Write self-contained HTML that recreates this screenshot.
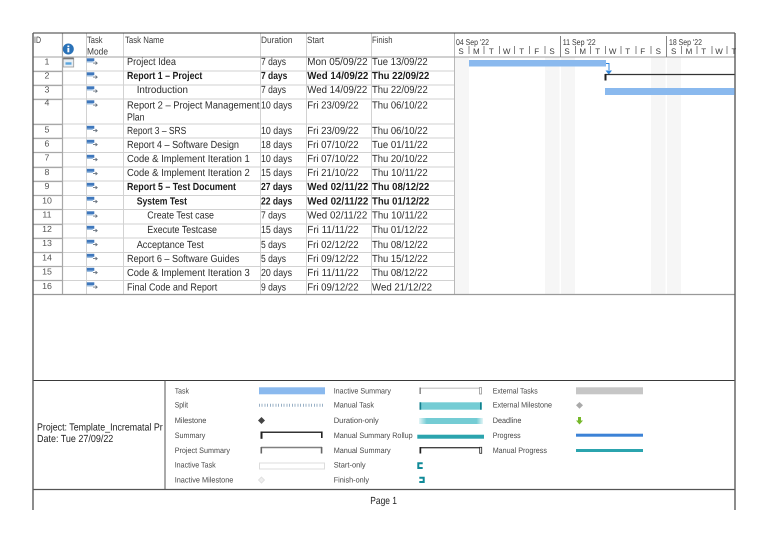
<!DOCTYPE html>
<html><head><meta charset="utf-8"><title>Gantt</title>
<style>
html,body{margin:0;padding:0;background:#fff;width:768px;height:543px;overflow:hidden}
svg{display:block;filter:blur(.35px)}
text{font-family:"Liberation Sans",sans-serif;fill:#2c2c2c}
.n text{font-size:10.300px}
.n text.b{font-weight:bold;fill:#1c1c1c}
.id text{font-size:8.800px;text-anchor:middle;fill:#555}
.h text{font-size:9.200px;fill:#3c3c3c}
.d text{font-size:8px;text-anchor:middle;fill:#3c3c3c}
.l text{font-size:7.900px;fill:#484848}
</style></head><body>
<svg width="768" height="543" viewBox="0 0 768 543" xmlns="http://www.w3.org/2000/svg" text-rendering="geometricPrecision">
<rect width="768" height="543" fill="#fff"/>
<!-- weekend shading -->
<g fill="#f6f6f6">
<rect x="455" y="57" width="14" height="237"/>
<rect x="545" y="57" width="14.500" height="237"/><rect x="561" y="57" width="14" height="237"/>
<rect x="651" y="57" width="14.500" height="237"/><rect x="667" y="57" width="14" height="237"/>
</g>
<!-- row lines -->
<g stroke="#d2d2d2" stroke-width="1">
<path d="M33 71H454M33 85H454M33 99H454M33 124H454M33 138H454M33 152.500H454M33 167H454M33 181H454M33 195.500H454M33 209.500H454M33 224H454M33 238H454M33 252.500H454M33 266.500H454M33 280.500H454"/>
<path d="M86.500 57V294M123.500 33V294M260.500 33V294M306.500 33V294M371.500 33V294"/>
</g>
<path d="M62.500 33V294" stroke="#a8a8a8" stroke-width="1.200"/>
<path d="M86.500 33V57" stroke="#c8c8c8"/>
<path d="M33 71.500H62M33 85.500H62M33 99.500H62M33 124.500H62M33 138.500H62M33 152.500H62M33 167.500H62M33 181.500H62M33 195.500H62M33 209.500H62M33 224.500H62M33 238.500H62M33 252.500H62M33 266.500H62M33 280.500H62" stroke="#a8a8a8" stroke-width="1.200"/>
<path d="M454.500 33V294" stroke="#b8b8b8"/>
<path d="M33 57H735" stroke="#a0a0a0" stroke-width="1.100"/>
<path d="M33 294.500H735" stroke="#999" stroke-width="1.300"/>
<!-- frame -->
<path d="M33 33H735M33 380.500H735" stroke="#3a3a3a" stroke-width="1"/>
<path d="M33 489.500H735" stroke="#555" stroke-width="1.200"/>
<path d="M33 33V510M735 33V510" stroke="#5c5c5c" stroke-width="1.400"/>
<path d="M165 380.500V489.500" stroke="#555" stroke-width="1"/>
<!-- header labels -->
<g class="h">
<text x="34" y="43" textLength="7" lengthAdjust="spacingAndGlyphs">ID</text>
<text x="87" y="43" textLength="15.500" lengthAdjust="spacingAndGlyphs">Task</text>
<text x="87" y="54.500" textLength="21" lengthAdjust="spacingAndGlyphs">Mode</text>
<text x="125" y="43" textLength="39" lengthAdjust="spacingAndGlyphs">Task Name</text>
<text x="261" y="43" textLength="31.500" lengthAdjust="spacingAndGlyphs">Duration</text>
<text x="307" y="43" textLength="17" lengthAdjust="spacingAndGlyphs">Start</text>
<text x="372" y="43" textLength="20.500" lengthAdjust="spacingAndGlyphs">Finish</text>
</g>
<!-- info icon -->
<circle cx="68.300" cy="49" r="5.500" fill="#2a72b8"/>
<rect x="67.400" y="48" width="1.900" height="4.300" fill="#fff"/><rect x="67.400" y="45.500" width="1.900" height="1.700" fill="#fff"/>
<!-- calendar icon -->
<rect x="63.200" y="58.500" width="10.500" height="8.500" fill="#e8eef3" stroke="#999" stroke-width=".8"/>
<rect x="63.200" y="57.600" width="10.500" height="1.700" fill="#777"/>
<rect x="65.500" y="62.300" width="6" height="2.400" fill="#5aa5de"/>
<!-- mode icons -->
<defs>
<g id="m"><rect x="86.800" y="0" width="7.500" height="3" fill="#3f78bd"/><rect x="86.800" y="3" width="6" height="1.200" fill="#9dbfe2"/><path d="M93 4.800H97M95.500 3.300L97.200 4.800L95.500 6.300" stroke="#6a7480" stroke-width=".9" fill="none"/></g>
</defs>
<use href="#m" y="58.300"/><use href="#m" y="72.300"/><use href="#m" y="86.300"/><use href="#m" y="100.300"/>
<use href="#m" y="125.800"/><use href="#m" y="139.800"/><use href="#m" y="154.800"/><use href="#m" y="168.800"/>
<use href="#m" y="182.800"/><use href="#m" y="196.800"/><use href="#m" y="211.300"/><use href="#m" y="225.800"/>
<use href="#m" y="239.800"/><use href="#m" y="253.800"/><use href="#m" y="267.800"/><use href="#m" y="282.300"/>
<!-- ids -->
<g class="id">
<text x="47" y="64.500">1</text><text x="47" y="78.500">2</text><text x="47" y="92.500">3</text><text x="47" y="105.500">4</text>
<text x="47" y="132.700">5</text><text x="47" y="146.700">6</text><text x="47" y="160.700">7</text><text x="47" y="175">8</text>
<text x="47" y="189">9</text><text x="47" y="203.500">10</text><text x="47" y="217.500">11</text><text x="47" y="232">12</text>
<text x="47" y="246">13</text><text x="47" y="260.500">14</text><text x="47" y="274.500">15</text><text x="47" y="289">16</text>
</g>
<!-- names -->
<g class="n">
<text x="127" y="65" textLength="49" lengthAdjust="spacingAndGlyphs">Project Idea</text>
<text class="b" x="127" y="79" textLength="75.300" lengthAdjust="spacingAndGlyphs">Report 1 – Project</text>
<text x="136.700" y="93" textLength="51.300" lengthAdjust="spacingAndGlyphs">Introduction</text>
<text x="127" y="108.500" textLength="132.500" lengthAdjust="spacingAndGlyphs">Report 2 – Project Management</text>
<text x="127" y="120.500" textLength="17.500" lengthAdjust="spacingAndGlyphs">Plan</text>
<text x="127" y="134" textLength="59.300" lengthAdjust="spacingAndGlyphs">Report 3 – SRS</text>
<text x="127" y="148" textLength="112" lengthAdjust="spacingAndGlyphs">Report 4 – Software Design</text>
<text x="127" y="162" textLength="122.700" lengthAdjust="spacingAndGlyphs">Code &amp; Implement Iteration 1</text>
<text x="127" y="176" textLength="122.700" lengthAdjust="spacingAndGlyphs">Code &amp; Implement Iteration 2</text>
<text class="b" x="127" y="190" textLength="109" lengthAdjust="spacingAndGlyphs">Report 5 – Test Document</text>
<text class="b" x="136.700" y="204.500" textLength="50.300" lengthAdjust="spacingAndGlyphs">System Test</text>
<text x="147.300" y="218.500" textLength="66.700" lengthAdjust="spacingAndGlyphs">Create Test case</text>
<text x="147.300" y="233" textLength="69.700" lengthAdjust="spacingAndGlyphs">Execute Testcase</text>
<text x="136.700" y="248" textLength="67" lengthAdjust="spacingAndGlyphs">Acceptance Test</text>
<text x="127" y="262" textLength="112.300" lengthAdjust="spacingAndGlyphs">Report 6 – Software Guides</text>
<text x="127" y="276" textLength="122.700" lengthAdjust="spacingAndGlyphs">Code &amp; Implement Iteration 3</text>
<text x="127" y="290.500" textLength="90.300" lengthAdjust="spacingAndGlyphs">Final Code and Report</text>
<!-- durations -->
<text x="261" y="65" textLength="25" lengthAdjust="spacingAndGlyphs">7 days</text>
<text class="b" x="261" y="79" textLength="26.300" lengthAdjust="spacingAndGlyphs">7 days</text>
<text x="261" y="93" textLength="25" lengthAdjust="spacingAndGlyphs">7 days</text>
<text x="261" y="108.500" textLength="31" lengthAdjust="spacingAndGlyphs">10 days</text>
<text x="261" y="134" textLength="31" lengthAdjust="spacingAndGlyphs">10 days</text>
<text x="261" y="148" textLength="31" lengthAdjust="spacingAndGlyphs">18 days</text>
<text x="261" y="162" textLength="31" lengthAdjust="spacingAndGlyphs">10 days</text>
<text x="261" y="176" textLength="31" lengthAdjust="spacingAndGlyphs">15 days</text>
<text class="b" x="261" y="190" textLength="31.300" lengthAdjust="spacingAndGlyphs">27 days</text>
<text class="b" x="261" y="204.500" textLength="31.300" lengthAdjust="spacingAndGlyphs">22 days</text>
<text x="261" y="218.500" textLength="25" lengthAdjust="spacingAndGlyphs">7 days</text>
<text x="261" y="233" textLength="31" lengthAdjust="spacingAndGlyphs">15 days</text>
<text x="261" y="248" textLength="25" lengthAdjust="spacingAndGlyphs">5 days</text>
<text x="261" y="262" textLength="25" lengthAdjust="spacingAndGlyphs">5 days</text>
<text x="261" y="276" textLength="31" lengthAdjust="spacingAndGlyphs">20 days</text>
<text x="261" y="290.500" textLength="25" lengthAdjust="spacingAndGlyphs">9 days</text>
<!-- start -->
<text x="307.300" y="65" textLength="60.300" lengthAdjust="spacingAndGlyphs">Mon 05/09/22</text>
<text class="b" x="307.300" y="79" textLength="61" lengthAdjust="spacingAndGlyphs">Wed 14/09/22</text>
<text x="307.300" y="93" textLength="60" lengthAdjust="spacingAndGlyphs">Wed 14/09/22</text>
<text x="307.300" y="108.500" textLength="51.300" lengthAdjust="spacingAndGlyphs">Fri 23/09/22</text>
<text x="307.300" y="134" textLength="51.300" lengthAdjust="spacingAndGlyphs">Fri 23/09/22</text>
<text x="307.300" y="148" textLength="51.300" lengthAdjust="spacingAndGlyphs">Fri 07/10/22</text>
<text x="307.300" y="162" textLength="51.300" lengthAdjust="spacingAndGlyphs">Fri 07/10/22</text>
<text x="307.300" y="176" textLength="51.300" lengthAdjust="spacingAndGlyphs">Fri 21/10/22</text>
<text class="b" x="307.300" y="190" textLength="61" lengthAdjust="spacingAndGlyphs">Wed 02/11/22</text>
<text class="b" x="307.300" y="204.500" textLength="61" lengthAdjust="spacingAndGlyphs">Wed 02/11/22</text>
<text x="307.300" y="218.500" textLength="60" lengthAdjust="spacingAndGlyphs">Wed 02/11/22</text>
<text x="307.300" y="233" textLength="51.300" lengthAdjust="spacingAndGlyphs">Fri 11/11/22</text>
<text x="307.300" y="248" textLength="51.300" lengthAdjust="spacingAndGlyphs">Fri 02/12/22</text>
<text x="307.300" y="262" textLength="51.300" lengthAdjust="spacingAndGlyphs">Fri 09/12/22</text>
<text x="307.300" y="276" textLength="51.300" lengthAdjust="spacingAndGlyphs">Fri 11/11/22</text>
<text x="307.300" y="290.500" textLength="51.300" lengthAdjust="spacingAndGlyphs">Fri 09/12/22</text>
<!-- finish -->
<text x="372" y="65" textLength="55.700" lengthAdjust="spacingAndGlyphs">Tue 13/09/22</text>
<text class="b" x="372" y="79" textLength="57.300" lengthAdjust="spacingAndGlyphs">Thu 22/09/22</text>
<text x="372" y="93" textLength="55.700" lengthAdjust="spacingAndGlyphs">Thu 22/09/22</text>
<text x="372" y="108.500" textLength="55.700" lengthAdjust="spacingAndGlyphs">Thu 06/10/22</text>
<text x="372" y="134" textLength="55.700" lengthAdjust="spacingAndGlyphs">Thu 06/10/22</text>
<text x="372" y="148" textLength="55.700" lengthAdjust="spacingAndGlyphs">Tue 01/11/22</text>
<text x="372" y="162" textLength="55.700" lengthAdjust="spacingAndGlyphs">Thu 20/10/22</text>
<text x="372" y="176" textLength="55.700" lengthAdjust="spacingAndGlyphs">Thu 10/11/22</text>
<text class="b" x="372" y="190" textLength="57.300" lengthAdjust="spacingAndGlyphs">Thu 08/12/22</text>
<text class="b" x="372" y="204.500" textLength="57.300" lengthAdjust="spacingAndGlyphs">Thu 01/12/22</text>
<text x="372" y="218.500" textLength="55.700" lengthAdjust="spacingAndGlyphs">Thu 10/11/22</text>
<text x="372" y="233" textLength="55.700" lengthAdjust="spacingAndGlyphs">Thu 01/12/22</text>
<text x="372" y="248" textLength="55.700" lengthAdjust="spacingAndGlyphs">Thu 08/12/22</text>
<text x="372" y="262" textLength="55.700" lengthAdjust="spacingAndGlyphs">Thu 15/12/22</text>
<text x="372" y="276" textLength="55.700" lengthAdjust="spacingAndGlyphs">Thu 08/12/22</text>
<text x="372" y="290.500" textLength="60" lengthAdjust="spacingAndGlyphs">Wed 21/12/22</text>
</g>
<!-- timescale -->
<g class="h">
<text x="456" y="45" textLength="33" lengthAdjust="spacingAndGlyphs" style="font-size:8.400px">04 Sep '22</text>
<text x="562.700" y="45" textLength="33" lengthAdjust="spacingAndGlyphs" style="font-size:8.400px">11 Sep '22</text>
<text x="669" y="45" textLength="33" lengthAdjust="spacingAndGlyphs" style="font-size:8.400px">18 Sep '22</text>
</g>
<path d="M560.500 36V57M666.500 36V57" stroke="#777" stroke-width=".9"/>
<path d="M469 46V54M484 46V54M499.500 46V54M514.500 46V54M529.500 46V54M545 46V54M575.500 46V54M590.500 46V54M605.500 46V54M621 46V54M636 46V54M651 46V54M681.500 46V54M697 46V54M712 46V54M727 46V54" stroke="#777" stroke-width=".9"/>
<g class="d">
<text x="461" y="54">S</text><text x="476.300" y="54">M</text><text x="491.300" y="54">T</text><text x="506.700" y="54">W</text><text x="521.700" y="54">T</text><text x="536.700" y="54">F</text><text x="552" y="54">S</text>
<text x="567" y="54">S</text><text x="582.700" y="54">M</text><text x="597.700" y="54">T</text><text x="612.700" y="54">W</text><text x="627.700" y="54">T</text><text x="642.700" y="54">F</text><text x="658.300" y="54">S</text>
<text x="673.700" y="54">S</text><text x="689" y="54">M</text><text x="703.700" y="54">T</text><text x="719" y="54">W</text><text x="734" y="54">T</text>
</g>
<rect x="736" y="40" width="32" height="20" fill="#fff"/>
<!-- bars -->
<rect x="469" y="60" width="137" height="6.500" fill="#8ab9ee"/>
<path d="M606 63.500H609V70" stroke="#2f86dc" stroke-width="1" fill="none"/>
<path d="M605.500 70.500H612L608.800 74.500Z" fill="#2f86dc"/>
<path d="M605 74.500H734.500" stroke="#333" stroke-width="1.300"/>
<rect x="604.500" y="74" width="2" height="6.500" fill="#222"/>
<rect x="605" y="88" width="129.500" height="7" fill="#8ab9ee"/>
<!-- footer left -->
<text x="37" y="430.500" textLength="125.700" lengthAdjust="spacingAndGlyphs" style="font-size:10.300px;fill:#222">Project: Template_Incrematal Pr</text>
<text x="37" y="442" textLength="76.300" lengthAdjust="spacingAndGlyphs" style="font-size:10.300px;fill:#222">Date: Tue 27/09/22</text>
<text x="370.300" y="504" textLength="26.700" lengthAdjust="spacingAndGlyphs" style="font-size:10.300px;fill:#222">Page 1</text>
<!-- legend labels -->
<g class="l">
<text x="174.700" y="393.500" textLength="14.300" lengthAdjust="spacingAndGlyphs">Task</text>
<text x="174.700" y="407.500" textLength="13.300" lengthAdjust="spacingAndGlyphs">Split</text>
<text x="174.700" y="423" textLength="31.700" lengthAdjust="spacingAndGlyphs">Milestone</text>
<text x="174.700" y="438" textLength="30.700" lengthAdjust="spacingAndGlyphs">Summary</text>
<text x="174.700" y="453" textLength="55.300" lengthAdjust="spacingAndGlyphs">Project Summary</text>
<text x="174.700" y="467.500" textLength="41" lengthAdjust="spacingAndGlyphs">Inactive Task</text>
<text x="174.700" y="482.500" textLength="58.700" lengthAdjust="spacingAndGlyphs">Inactive Milestone</text>
<text x="333.700" y="393.500" textLength="57.300" lengthAdjust="spacingAndGlyphs">Inactive Summary</text>
<text x="333.700" y="407.500" textLength="40.300" lengthAdjust="spacingAndGlyphs">Manual Task</text>
<text x="333.700" y="423" textLength="45" lengthAdjust="spacingAndGlyphs">Duration-only</text>
<text x="333.700" y="438" textLength="79" lengthAdjust="spacingAndGlyphs">Manual Summary Rollup</text>
<text x="333.700" y="453" textLength="57" lengthAdjust="spacingAndGlyphs">Manual Summary</text>
<text x="333.700" y="467.500" textLength="32" lengthAdjust="spacingAndGlyphs">Start-only</text>
<text x="333.700" y="482.500" textLength="35.300" lengthAdjust="spacingAndGlyphs">Finish-only</text>
<text x="492.700" y="393.500" textLength="45" lengthAdjust="spacingAndGlyphs">External Tasks</text>
<text x="492.700" y="407.500" textLength="59.300" lengthAdjust="spacingAndGlyphs">External Milestone</text>
<text x="492.700" y="423" textLength="28.700" lengthAdjust="spacingAndGlyphs">Deadline</text>
<text x="492.700" y="438" textLength="28" lengthAdjust="spacingAndGlyphs">Progress</text>
<text x="492.700" y="453" textLength="54.300" lengthAdjust="spacingAndGlyphs">Manual Progress</text>
</g>
<!-- legend symbols col 1 -->
<rect x="259" y="387.300" width="66" height="7" fill="#8ab9ee"/>
<path d="M259 405.300H323" stroke="#6f8fae" stroke-width="3" stroke-dasharray="1 1.500 1 2" opacity=".7"/>
<path d="M261.500 417L265 420.500L261.500 424L258 420.500Z" fill="#444"/>
<path d="M261 432.300H322" stroke="#333" stroke-width="1.500"/>
<rect x="260.500" y="431.500" width="2" height="7.300" fill="#222"/><rect x="321" y="431.500" width="1.600" height="6.500" fill="#222"/>
<path d="M261 447.500H322" stroke="#808080" stroke-width="1.500"/>
<rect x="260.500" y="447" width="1.600" height="6.500" fill="#666"/><rect x="320.800" y="447" width="1.600" height="6.500" fill="#666"/>
<rect x="259.500" y="463" width="65" height="6" fill="#fff" stroke="#dcdcdc"/>
<path d="M261.500 477L264.500 480L261.500 483L258.500 480Z" fill="#eee" stroke="#ddd" stroke-width=".8"/>
<!-- col 2 -->
<path d="M420 388.200H481" stroke="#d0d0d0" stroke-width="1.500"/>
<rect x="419.500" y="387.500" width="1.300" height="6.500" fill="#777"/>
<rect x="479.500" y="387.500" width="2" height="6.500" fill="#fff" stroke="#888" stroke-width=".7"/>
<rect x="419.500" y="402.300" width="62.500" height="7.400" fill="#74ccd4"/>
<rect x="419.500" y="402.300" width="1.700" height="7.400" fill="#137f8c"/><rect x="480" y="402.300" width="1.500" height="7.400" fill="#137f8c"/>
<defs><linearGradient id="g" x1="0" x2="1"><stop offset="0" stop-color="#74ccd4" stop-opacity=".2"/><stop offset=".12" stop-color="#74ccd4"/><stop offset=".9" stop-color="#74ccd4"/><stop offset="1" stop-color="#74ccd4" stop-opacity=".2"/></linearGradient></defs>
<rect x="419" y="418" width="64" height="6" fill="url(#g)"/>
<rect x="417.300" y="434.700" width="66.700" height="4" fill="#2ba4ae"/>
<path d="M420 447.700H482" stroke="#444" stroke-width="1.400"/>
<rect x="419.500" y="447" width="1.700" height="6.500" fill="#222"/>
<rect x="479.700" y="447.300" width="2" height="6" fill="#fff" stroke="#222" stroke-width=".8"/>
<path d="M422.700 463.300H418.300V468H422.700" fill="none" stroke="#108a98" stroke-width="2"/>
<path d="M419.300 477.700H423.700V482H419.300" fill="none" stroke="#108a98" stroke-width="2"/>
<!-- col 3 -->
<rect x="576" y="387.300" width="67" height="7" fill="#c6c6c6"/>
<path d="M579.500 402L583 405.300L579.500 408.700L576 405.300Z" fill="#aaa"/>
<path d="M578 417H581V420.500H583L579.500 424.500L576 420.500H578Z" fill="#76b82a"/>
<rect x="576" y="433.700" width="67" height="3" fill="#3c82d6"/>
<rect x="576" y="449" width="67" height="3" fill="#2ba4ae"/>
</svg>
</body></html>
